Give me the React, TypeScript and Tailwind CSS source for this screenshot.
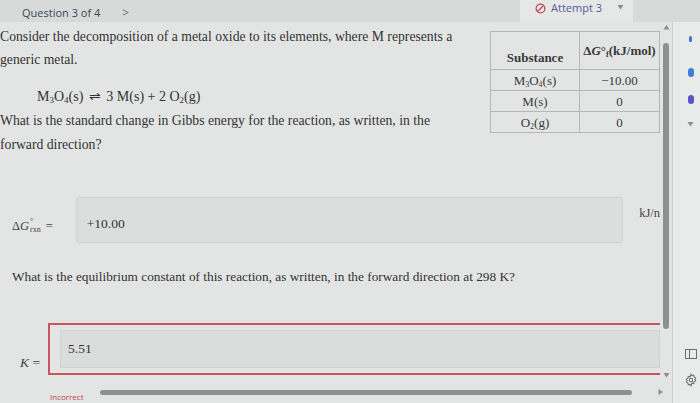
import React from "react";

const serif = { fontFamily: '"Liberation Serif", "Times New Roman", serif' };

function AttemptIcon() {
  return (
    <svg width="11" height="11" viewBox="0 0 12 12" fill="none">
      <circle cx="6" cy="6" r="4.8" stroke="#c2455a" strokeWidth="1.4" />
      <path d="M2.8 9.2 9.2 2.8" stroke="#c2455a" strokeWidth="1.4" />
    </svg>
  );
}

function Tri({ dir }: { dir: "up" | "down" | "right" }) {
  const d = dir === "up" ? "M0 6 4 0 8 6z" : dir === "down" ? "M0 0h8L4 6z" : "M0 0l6 4-6 4z";
  return (
    <svg width="7" height="6" viewBox="0 0 8 8" fill="#8b8e90">
      <path d={d} />
    </svg>
  );
}

function RightRail() {
  return (
    <div className="flex w-[28px] shrink-0 flex-col items-center border-l border-[#cfd1d0] bg-[#e9ebea] pl-[8px] pt-[14px]">
      <span className="h-[6px] w-[3px] rounded-sm bg-[#4a6fd0]" />
      <span className="mt-[26px] h-[9px] w-[6px] rounded-sm bg-[#3f7fd8]" />
      <span className="mt-[18px] h-[9px] w-[6px] rounded-sm bg-[#5b55c9]" />
      <span className="mt-[18px]">
        <Tri dir="down" />
      </span>
      <div className="flex-1" />
      <svg width="12" height="10" viewBox="0 0 12 10">
        <rect x="0.5" y="0.5" width="11" height="9" fill="none" stroke="#6c6f71" />
        <path d="M4.5 0.5v9" stroke="#6c6f71" />
      </svg>
      <svg width="14" height="14" viewBox="0 0 24 24" className="mb-[16px] mt-[14px]" fill="none" stroke="#6c6f71" strokeWidth="1.8">
        <circle cx="12" cy="12" r="3" />
        <path d="M12 2l1.6 2.6 3-.8.8 3 2.6 1.6-1.4 2.6 1.4 2.6-2.6 1.6-.8 3-3-.8L12 22l-1.6-2.6-3 .8-.8-3L4 15.6 5.4 13 4 10.4l2.6-1.6.8-3 3 .8z" />
      </svg>
    </div>
  );
}

function GibbsTable() {
  const rows = [
    { s: <>M<sub className="text-[8px]">3</sub>O<sub className="text-[8px]">4</sub>(s)</>, v: "−10.00" },
    { s: <>M(s)</>, v: "0" },
    { s: <>O<sub className="text-[8px]">2</sub>(g)</>, v: "0" },
  ];
  return (
    <table className="w-[170px] border-collapse text-[13px] text-[#3a3a3a]" style={serif}>
      <thead>
        <tr>
          <th className="h-[38px] w-[89px] border border-[#b5b7b6] align-bottom pb-[2px] font-bold">Substance</th>
          <th className="border border-[#b5b7b6] align-top pt-[9px] font-bold whitespace-nowrap">
            Δ<i>G</i>°<sub className="text-[8px]">f</sub>(kJ/mol)
          </th>
        </tr>
      </thead>
      <tbody>
        {rows.map((r, i) => (
          <tr key={i} className="h-[21px]">
            <td className="border border-[#b5b7b6] text-center leading-none">{r.s}</td>
            <td className="border border-[#b5b7b6] text-center leading-none">{r.v}</td>
          </tr>
        ))}
      </tbody>
    </table>
  );
}

export default function App() {
  return (
    <div className="flex h-[403px] w-[700px] flex-col overflow-hidden bg-[#e3e5e4]">
      <div className="flex h-[22px] shrink-0 items-stretch bg-[#d8dad9]" style={{ fontFamily: '"Open Sans", sans-serif' }}>
        <div className="flex items-center pl-[22px] pt-[4px] text-[11px] text-[#3b4756]">
          Question 3 of 4
          <span className="ml-[22px] text-[12px] text-[#6a7480]">&gt;</span>
        </div>
        <div className="ml-auto mr-[67px] flex w-[113px] items-center gap-[5px] bg-[#e6e8e7] pl-[15px] pb-[6px] text-[11px] text-[#555a9c]">
          <AttemptIcon />
          Attempt 3
          <span className="ml-auto mr-[9px]">
            <Tri dir="down" />
          </span>
        </div>
      </div>

      <div className="flex min-h-0 flex-1">
        <div className="flex min-w-0 flex-1 flex-col">
          <div className="flex min-h-0 flex-1">
            <div className="flex min-w-0 flex-1 flex-col text-[13.7px] text-[#333]" style={serif}>
              <div className="flex">
                <div className="w-[466px] shrink-0 pt-[3px]">
                  <p className="leading-[23px]">
                    Consider the decomposition of a metal oxide to its elements, where M represents a generic metal.
                  </p>
                  <p className="ml-[37px] mt-[16px] text-[14px] leading-[20px]">
                    M<sub className="text-[9px]">3</sub>O<sub className="text-[9px]">4</sub>(s){" "}
                    <span className="mx-[2px] text-[14px]">⇌</span> 3 M(s) + 2 O<sub className="text-[9px]">2</sub>(g)
                  </p>
                  <p className="mt-[2px] w-[440px] leading-[24px]">
                    What is the standard change in Gibbs energy for the reaction, as written, in the forward direction?
                  </p>
                </div>
                <div className="ml-[24px] mt-[9px] shrink-0">
                  <GibbsTable />
                </div>
              </div>

              <div className="mt-[40px] flex items-center">
                <span className="ml-[12px] mt-[12px] flex w-[65px] items-center text-[12.5px] text-[#444]">
                  Δ<i>G</i>
                  <span className="ml-[1px] inline-flex flex-col text-[8px] leading-[8px]">
                    <span>°</span>
                    <span>rxn</span>
                  </span>
                  <span className="ml-[5px]">=</span>
                </span>
                <div className="flex h-[46px] w-[559px] items-center rounded-[3px] border border-[#cfd1d0] bg-[#dcdedd] pl-[10px] pt-[8px] text-[13.5px] text-[#333]">
                  +10.00
                </div>
                <span className="-mt-[14px] ml-[16px] text-[12.5px] text-[#444]">kJ/n</span>
              </div>

              <p className="ml-[12px] mt-[25px] text-[13.3px] leading-[18px] text-[#333]">
                What is the equilibrium constant of this reaction, as written, in the forward direction at 298 K?
              </p>

              <div className="mt-[37px] flex items-end">
                <span className="mb-[2px] ml-[20px] w-[28px] text-[13.5px] text-[#444]">
                  <i>K</i> =
                </span>
                <div className="flex-1 border-y-2 border-l-2 border-[#c9545f] py-[5px] pl-[10px]">
                  <div className="flex h-[38px] items-center border border-[#d2d4d3] bg-[#dbdddc] pl-[7px] text-[13.5px]">5.51</div>
                </div>
              </div>
            </div>

            <div className="flex w-[12px] shrink-0 flex-col items-center">
              <span className="mt-[3px]">
                <Tri dir="up" />
              </span>
              <div className="mt-[12px] h-[286px] w-[6px] rounded-full bg-[#8f9191]" />
              <div className="flex-1" />
              <span className="mb-[8px]">
                <Tri dir="down" />
              </span>
            </div>
          </div>
          <div className="flex h-[16px] shrink-0">
            <span
              className="ml-[50px] mt-[5px] w-[50px] text-[8px] leading-[10px] text-[#c2414f]"
              style={{ fontFamily: '"Open Sans", sans-serif' }}
            >
              Incorrect
            </span>
            <div className="mt-[3px] h-[5px] w-[532px] rounded-full bg-[#8f9191]" />
            <span className="ml-[26px] mt-[2px]">
              <Tri dir="right" />
            </span>
          </div>
        </div>
        <RightRail />
      </div>
    </div>
  );
}
